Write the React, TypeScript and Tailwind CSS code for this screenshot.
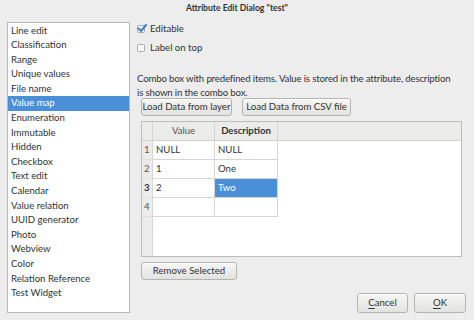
import React from "react";

const widgets = [
  "Line edit",
  "Classification",
  "Range",
  "Unique values",
  "File name",
  "Value map",
  "Enumeration",
  "Immutable",
  "Hidden",
  "Checkbox",
  "Text edit",
  "Calendar",
  "Value relation",
  "UUID generator",
  "Photo",
  "Webview",
  "Color",
  "Relation Reference",
  "Test Widget",
];

const rows = [
  { n: "1", value: "NULL", desc: "NULL" },
  { n: "2", value: "1", desc: "One" },
  { n: "3", value: "2", desc: "Two", selected: true },
  { n: "4", value: "", desc: "" },
];

const btn =
  "h-[18px] whitespace-nowrap rounded-[3px] border border-[#b4b4b0] bg-gradient-to-b from-[#f6f6f5] to-[#e2e2e0] text-[#2e3436] flex items-center justify-center shadow-[inset_0_1px_0_#fff]";

function CheckBox({ checked }: { checked?: boolean }) {
  return (
    <svg width="10" height="10" viewBox="0 0 10 10" className="shrink-0">
      <rect x="0.5" y="1.5" width="7" height="7" rx="1" fill="#fafafa" stroke="#a8a8a5" />
      {checked && (
        <path d="M1.5 4.5 L4 7 L9 1" fill="none" stroke="#3d7fcf" strokeWidth="2" strokeLinecap="round" strokeLinejoin="round" />
      )}
    </svg>
  );
}

export default function App() {
  return (
    <div
      className="w-[474px] h-[320px] overflow-hidden bg-[#ededed] text-[#2e3436] text-[9.6px] leading-none"
      style={{ fontFamily: 'Lato, "Liberation Sans", sans-serif' }}
    >
      {/* Title bar */}
      <div className="h-[17px] flex items-center justify-center text-[8.6px] font-bold text-[#2e3436]">
        Attribute Edit Dialog "test"
      </div>

      <div className="flex">
        {/* Widget type list */}
        <div className="ml-[7px] mt-[5px] w-[123px] h-[291px] border border-[#b8b8b5] bg-white">
          {widgets.map((w) => (
            <div
              key={w}
              className={
                "h-[14.6px] pl-[3px] flex items-center whitespace-nowrap " +
                (w === "Value map" ? "bg-[#4a90d9] text-white" : "")
              }
            >
              {w}
            </div>
          ))}
        </div>

        {/* Config panel */}
        <div className="flex flex-col pl-[7px] w-[337px]">
          <div className="flex items-center gap-[3px] h-[14px] mt-[5px]">
            <CheckBox checked />
            <span>Editable</span>
          </div>
          <div className="flex items-center gap-[3px] h-[14px] mt-[5px]">
            <CheckBox />
            <span>Label on top</span>
          </div>

          <div className="mt-[17px] leading-[14px] whitespace-nowrap tracking-[-0.15px]">
            Combo box with predefined items. Value is stored in the attribute, description
            <br />
            is shown in the combo box.
          </div>

          <div className="flex gap-[10px] -mt-[2px] pl-[4px]">
            <div className={btn + " w-[91px]"}>Load Data from layer</div>
            <div className={btn + " w-[109px]"}>Load Data from CSV file</div>
          </div>

          {/* Table */}
          <div className="ml-[4px] mt-[5px] w-[321px] h-[136px] border border-[#bdbdbb] bg-white flex flex-col">
            <div className="flex h-[19px] bg-[#ececeb] border-b border-[#cfcfcd]">
              <div className="w-[11px] border-r border-[#d6d6d4]" />
              <div className="w-[62px] border-r border-[#d6d6d4] flex items-center justify-center text-[#555]">
                Value
              </div>
              <div className="w-[63px] border-r border-[#d6d6d4] flex items-center justify-center font-bold">
                Description
              </div>
            </div>
            <div className="flex flex-1">
              <div className="w-[11px] bg-[#ececeb] border-r border-[#d6d6d4] flex flex-col">
                {rows.map((r) => (
                  <div
                    key={r.n}
                    className={
                      "h-[19px] pl-[2px] flex items-center border-b border-[#e2e2e0] " +
                      (r.selected ? "font-bold" : "text-[#555]")
                    }
                  >
                    {r.n}
                  </div>
                ))}
              </div>
              <div className="flex flex-col">
                {rows.map((r) => (
                  <div key={r.n} className="flex h-[19px] border-b border-[#d6d6d4]">
                    <div className="w-[62px] pl-[3px] flex items-center border-r border-[#d6d6d4]">
                      {r.value}
                    </div>
                    <div
                      className={
                        "w-[63px] pl-[3px] flex items-center border-r border-[#d6d6d4] " +
                        (r.selected ? "bg-[#4a90d9] text-white" : "")
                      }
                    >
                      {r.desc}
                    </div>
                  </div>
                ))}
              </div>
            </div>
          </div>

          <div className="mt-[5px] pl-[4px]">
            <div className={btn + " w-[96px]"}>Remove Selected</div>
          </div>

          <div className="flex justify-end gap-[6px] mt-[13px] pr-[1px]">
            <div className={btn + " w-[51px] h-[20px]"}>
              <span className="underline underline-offset-2">C</span>ancel
            </div>
            <div className={btn + " w-[52px] h-[20px]"}>
              <span className="underline underline-offset-2">O</span>K
            </div>
          </div>
        </div>
      </div>
    </div>
  );
}
